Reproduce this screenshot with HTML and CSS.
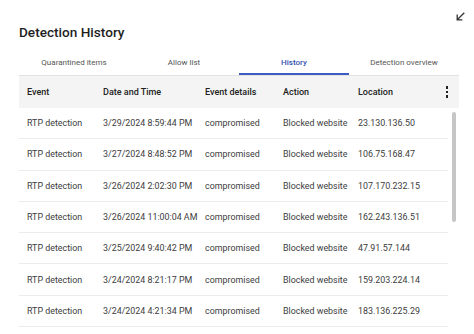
FILE: index.html
```html
<!DOCTYPE html>
<html>
<head>
<meta charset="utf-8">
<link rel="stylesheet" href="styles.css">
</head>
<body>
<div class="panel">
  <div class="topbar">
    <svg class="collapse" width="9" height="9" viewBox="0 0 9 9"><path d="M8.3 0.7 L1.2 7.8 M1.2 2.6 V7.8 H6.4" fill="none" stroke="#333" stroke-width="1.3"/></svg>
  </div>
  <h1 class="title">Detection History</h1>
  <div class="tabs">
    <div class="tab">Quarantined items</div>
    <div class="tab">Allow list</div>
    <div class="tab active">History</div>
    <div class="tab">Detection overview</div>
  </div>
  <div class="table">
    <div class="thead">
      <div class="c c1">Event</div>
      <div class="c c2">Date and Time</div>
      <div class="c c3">Event details</div>
      <div class="c c4">Action</div>
      <div class="c c5">Location</div>
      <div class="kebab"><span></span><span></span><span></span></div>
    </div>
    <div class="tbody">
      <div class="rows">
        <div class="row"><div class="c c1">RTP detection</div><div class="c c2">3/29/2024 8:59:44 PM</div><div class="c c3">compromised</div><div class="c c4">Blocked website</div><div class="c c5">23.130.136.50</div></div>
        <div class="row"><div class="c c1">RTP detection</div><div class="c c2">3/27/2024 8:48:52 PM</div><div class="c c3">compromised</div><div class="c c4">Blocked website</div><div class="c c5">106.75.168.47</div></div>
        <div class="row"><div class="c c1">RTP detection</div><div class="c c2">3/26/2024 2:02:30 PM</div><div class="c c3">compromised</div><div class="c c4">Blocked website</div><div class="c c5">107.170.232.15</div></div>
        <div class="row"><div class="c c1">RTP detection</div><div class="c c2">3/26/2024 11:00:04 AM</div><div class="c c3">compromised</div><div class="c c4">Blocked website</div><div class="c c5">162.243.136.51</div></div>
        <div class="row"><div class="c c1">RTP detection</div><div class="c c2">3/25/2024 9:40:42 PM</div><div class="c c3">compromised</div><div class="c c4">Blocked website</div><div class="c c5">47.91.57.144</div></div>
        <div class="row"><div class="c c1">RTP detection</div><div class="c c2">3/24/2024 8:21:17 PM</div><div class="c c3">compromised</div><div class="c c4">Blocked website</div><div class="c c5">159.203.224.14</div></div>
        <div class="row"><div class="c c1">RTP detection</div><div class="c c2">3/24/2024 4:21:34 PM</div><div class="c c3">compromised</div><div class="c c4">Blocked website</div><div class="c c5">183.136.225.29</div></div>
      </div>
      <div class="scroll"><div class="thumb"></div></div>
    </div>
  </div>
</div>
</body>
</html>
```
FILE: styles.css
```css
html, body {
  margin: 0;
  padding: 0;
  background: #ffffff;
  overflow: hidden;
}
body {
  font-family: Roboto, "Noto Sans", sans-serif;
  color: #333;
}
.panel {
  width: 474px;
  height: 334px;
  box-sizing: border-box;
  padding: 0 15px 0 19px;
}
.topbar {
  height: 21px;
  display: flex;
  justify-content: flex-end;
  align-items: flex-end;
  margin-right: -6px;
}
.collapse { display: block; }
.title {
  margin: 2px 0 0 0;
  font-size: 13.6px;
  font-weight: 500;
  color: #1f1f1f;
  line-height: 18px;
  height: 24px;
}
.tabs {
  display: grid;
  grid-template-columns: repeat(4, 1fr);
  border-bottom: 1px solid #e3e3e3;
  margin-top: 6px;
}
.tab {
  text-align: center;
  font-size: 8px;
  color: #555;
  height: 22px;
  line-height: 20px;
  box-sizing: border-box;
}
.tab.active {
  color: #2f4fb0;
  font-weight: 500;
  border-bottom: 2px solid #3b5cc4;
}
.table { width: 440px; }
.thead {
  display: flex;
  align-items: center;
  height: 32px;
  background: #f4f4f4;
  font-size: 9px;
  font-weight: 500;
  color: #222;
}
.c { padding-left: 8px; white-space: nowrap; box-sizing: border-box; }
.c1 { width: 76px; }
.c2 { width: 102px; }
.c3 { width: 78px; }
.c4 { width: 75px; }
.c5 { width: 80px; }
.kebab {
  margin-left: auto;
  margin-right: 11px;
  display: flex;
  flex-direction: column;
  gap: 2px;
}
.kebab span {
  width: 2.5px;
  height: 2.5px;
  background: #222;
  display: block;
}
.tbody {
  display: flex;
}
.rows { width: 429px; }
.row {
  display: flex;
  align-items: center;
  height: 31.3px;
  box-sizing: border-box;
  border-bottom: 1px solid #ececec;
  font-size: 8.9px;
  color: #3c3c3c;
}
.scroll {
  flex: 1;
  padding: 4px 0 0 4px;
}
.thumb {
  width: 4px;
  height: 110px;
  background: #c6c6c6;
  border-radius: 2px;
}
```
